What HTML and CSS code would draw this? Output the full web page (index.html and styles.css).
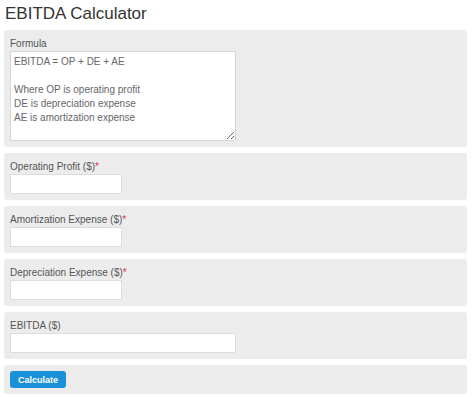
FILE: index.html
```
<!DOCTYPE html>
<html lang="en">
<head>
    <meta charset="UTF-8">
    <meta name="viewport" content="width=device-width, initial-scale=1.0">
    <title>EBITDA Calculator</title>
    <link rel="stylesheet" href="styles.css">
</head>
<body>
    <div class="page">
        <h1 class="title">EBITDA Calculator</h1>

        <div class="panel">
            <label class="field-label" for="formula">Formula</label>
            <textarea id="formula" class="formula-box" readonly>EBITDA = OP + DE + AE

Where OP is operating profit
DE is depreciation expense
AE is amortization expense</textarea>
        </div>

        <div class="panel">
            <label class="field-label" for="op">Operating Profit ($)<span class="req">*</span></label>
            <input type="text" id="op" class="field-input">
        </div>

        <div class="panel">
            <label class="field-label" for="ae">Amortization Expense ($)<span class="req">*</span></label>
            <input type="text" id="ae" class="field-input">
        </div>

        <div class="panel">
            <label class="field-label" for="de">Depreciation Expense ($)<span class="req">*</span></label>
            <input type="text" id="de" class="field-input">
        </div>

        <div class="panel">
            <label class="field-label" for="result">EBITDA ($)</label>
            <input type="text" id="result" class="field-input wide" readonly>
        </div>

        <div class="panel">
            <button class="calc-btn" onclick="
                let op = parseFloat(document.getElementById('op').value) || 0;
                let ae = parseFloat(document.getElementById('ae').value) || 0;
                let de = parseFloat(document.getElementById('de').value) || 0;
                document.getElementById('result').value = op + de + ae;
            ">Calculate</button>
        </div>
    </div>
</body>
</html>
```

FILE: styles.css
```
*{
   margin:0;
   padding:0;
   box-sizing: border-box;
}
body{
   background:#fff;
   font-family: "Liberation Sans", Arial, Helvetica, sans-serif;
   color:#555;
}
.page{
   width:463px;
   margin-left:4px;
}
.title{
   font-size:17px;
   line-height:20px;
   font-weight:normal;
   color:#333;
   margin:4px 0 6px 1px;
}
.panel{
   background-color:#ececec;
   border-radius:3px;
   padding:6px;
   margin-bottom:6px;
}
.field-label{
   display:block;
   font-size:10px;
   line-height:15px;
   color:#555;
}
.req{
   color:#e0303a;
}
.field-input{
   display:block;
   width:112px;
   height:20px;
   border:1px solid #ddd;
   background:#fff;
   font-family: inherit;
   font-size:10px;
   padding:0 4px;
}
.field-input.wide{
   width:226px;
}
.formula-box{
   display:block;
   width:226px;
   height:90px;
   border:1px solid #d6d6d6;
   background:#fff;
   color:#666;
   font-family: inherit;
   font-size:10px;
   line-height:14px;
   padding:3px 3px;
   resize:both;
}
.calc-btn{
   display:block;
   width:56px;
   height:17px;
   border:none;
   border-radius:3px;
   background-color:#1a90d9;
   color:#fff;
   font-family: inherit;
   font-size:9px;
   font-weight:bold;
   cursor:pointer;
}
```
